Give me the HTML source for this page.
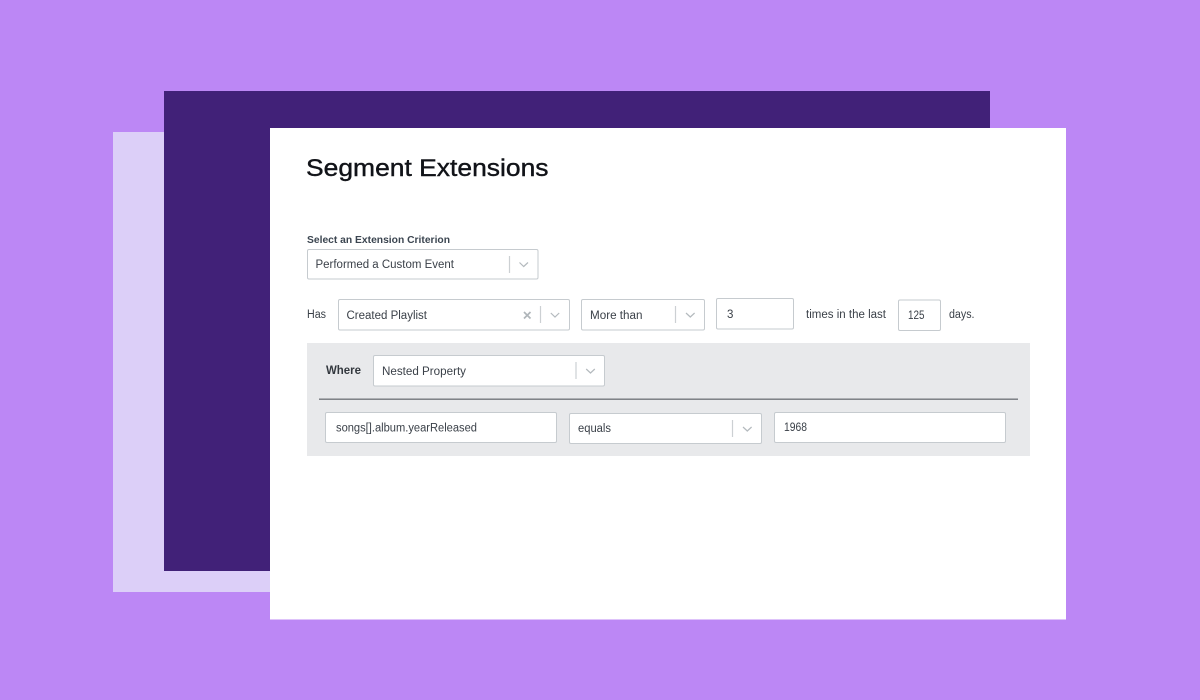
<!DOCTYPE html>
<html lang="en">
<head>
<meta charset="utf-8">
<title>Segment Extensions</title>
<style>
html,body{margin:0;padding:0;background:#bc87f5;width:1200px;height:700px;overflow:hidden}
svg{display:block;position:absolute;left:0;top:0}
text{font-family:"Liberation Sans",sans-serif;font-size:11.5px;fill:#3a4048}
.box{fill:#fff;stroke:#c6cbcf;stroke-width:1}
.sep{stroke:#ccd0d3;stroke-width:1.2;fill:none}
.chev{stroke:#b4babe;stroke-width:1.2;fill:none}
</style>
</head>
<body>
<svg width="1200" height="700" viewBox="0 0 1200 700" xmlns="http://www.w3.org/2000/svg">
<rect width="1200" height="700" fill="#bc87f5"/>
<rect x="113" y="132" width="157" height="460" fill="#dccff8"/>
<rect x="164" y="91" width="826" height="480" fill="#412178"/>
<rect x="270" y="128" width="796" height="491.5" fill="#fff"/>

<text x="306" y="176" textLength="242.5" lengthAdjust="spacingAndGlyphs" style="font-size:24px;fill:#111318;stroke:#111318;stroke-width:.4px">Segment Extensions</text>

<text x="307" y="243" textLength="143" lengthAdjust="spacingAndGlyphs" style="font-size:10.5px;font-weight:bold;fill:#3b4550">Select an Extension Criterion</text>

<rect class="box" x="307.5" y="249.5" width="230.5" height="29.5" rx="1.5"/>
<text x="315.5" y="268" textLength="138.5" lengthAdjust="spacingAndGlyphs">Performed a Custom Event</text>
<path class="sep" d="M509.5 256V273"/>
<path class="chev" d="M519.5 262.5L523.7 266.5L528 262.5"/>

<text x="307" y="318" textLength="19" lengthAdjust="spacingAndGlyphs">Has</text>

<rect class="box" x="338.5" y="299.5" width="231" height="30.5" rx="1.5"/>
<text x="346.5" y="319" textLength="80.5" lengthAdjust="spacingAndGlyphs">Created Playlist</text>
<path d="M524 312L530.5 318.5M530.5 312L524 318.5" stroke="#b0b6ba" stroke-width="1.7" fill="none"/>
<path class="sep" d="M540.5 306V323"/>
<path class="chev" d="M550.8 313L555 317L559.2 313"/>

<rect class="box" x="581.5" y="299.5" width="123" height="30.5" rx="1.5"/>
<text x="590" y="319" textLength="52.5" lengthAdjust="spacingAndGlyphs">More than</text>
<path class="sep" d="M675.5 306V323"/>
<path class="chev" d="M686 313L690.3 317L694.6 313"/>

<rect class="box" x="716.5" y="298.5" width="77" height="30.5" rx="1.5"/>
<text x="727" y="318">3</text>

<text x="806" y="318" textLength="80" lengthAdjust="spacingAndGlyphs">times in the last</text>

<rect class="box" x="898.5" y="300" width="42" height="30.5" rx="1.5"/>
<text x="908" y="319" textLength="16.5" lengthAdjust="spacingAndGlyphs">125</text>

<text x="949" y="318" textLength="25.5" lengthAdjust="spacingAndGlyphs">days.</text>

<rect x="307" y="343" width="723" height="113" fill="#e8e9eb"/>

<text x="326" y="374" textLength="35" lengthAdjust="spacingAndGlyphs" style="font-weight:bold;font-size:11.5px;fill:#33383e">Where</text>

<rect class="box" x="373.5" y="355.5" width="231" height="30.5" rx="1.5"/>
<text x="382" y="375" textLength="84" lengthAdjust="spacingAndGlyphs">Nested Property</text>
<path class="sep" d="M576 362V379"/>
<path class="chev" d="M586.2 369L590.5 373L594.8 369"/>

<rect x="319" y="398.5" width="699" height="1.4" fill="#74787e"/>

<rect class="box" x="325.5" y="412.5" width="231" height="30" rx="1.5"/>
<text x="336" y="431.5" textLength="141" lengthAdjust="spacingAndGlyphs">songs[].album.yearReleased</text>

<rect class="box" x="569.5" y="413.5" width="192" height="30" rx="1.5"/>
<text x="578" y="432" textLength="33" lengthAdjust="spacingAndGlyphs">equals</text>
<path class="sep" d="M732.5 420V437"/>
<path class="chev" d="M743 427L747.3 431L751.6 427"/>

<rect class="box" x="774.5" y="412.5" width="231" height="30" rx="1.5"/>
<text x="784" y="431" textLength="23" lengthAdjust="spacingAndGlyphs">1968</text>
</svg>
</body>
</html>
